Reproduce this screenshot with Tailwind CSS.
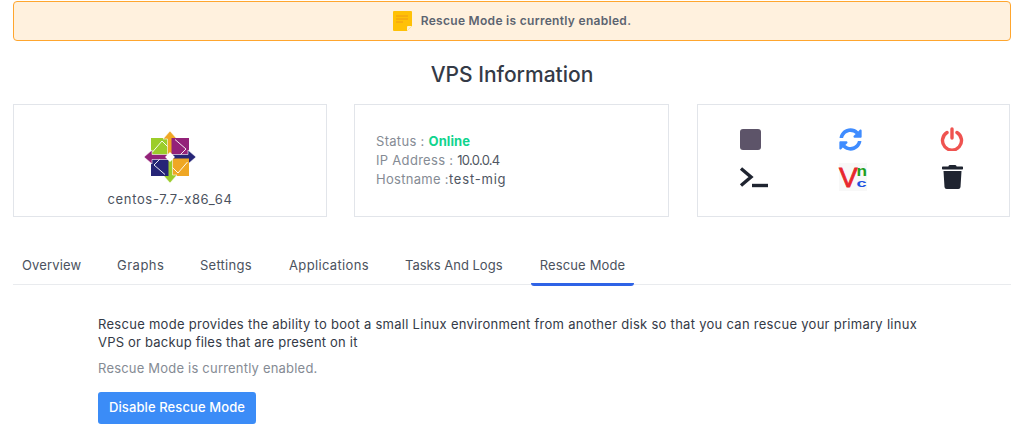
<!DOCTYPE html>
<html lang="en">
<head>
    <meta charset="UTF-8">
    <title>VPS Information</title>
    <script src="https://cdn.jsdelivr.net/npm/@tailwindcss/browser@4"></script>
</head>
<body class="bg-white font-['Inter',sans-serif] text-[#3f4651] overflow-hidden">
    <div class="px-[13px] pt-[1px]">

        <!-- Alert -->
        <div class="h-[40px] bg-[#fff1de] border border-[#ffa62e] rounded-[4px] flex items-center justify-center gap-[8px]">
            <svg class="w-[19px] h-[20px]" viewBox="0 0 19 20">
                <path d="M0 1a1 1 0 0 1 1-1h17a1 1 0 0 1 1 1v14l-5 5H1a1 1 0 0 1-1-1z" fill="#ffc107"/>
                <path d="M3 5h12M3 8h12M3 11h7" stroke="#f09a17" stroke-width="1"/>
                <path d="M14 20v-4a1 1 0 0 1 1-1h4z" fill="#fff3d0"/>
            </svg>
            <span class="text-[12px] font-semibold tracking-[0.3px] text-[#5c6470] ml-[1px]">Rescue Mode is currently enabled.</span>
        </div>

        <h2 class="mt-[21px] h-[26px] leading-[26px] text-center text-[21px] font-medium text-[#343a46]">VPS Information</h2>

        <!-- Cards -->
        <div class="mt-[16px] flex h-[113px]">
            <div class="w-[314px] border border-[#e2e5ea] flex flex-col items-center pt-[26px]">
                <svg class="w-[52px] h-[52px]" viewBox="0 0 52 52">
                    <g>
                        <rect x="7" y="7" width="17.500" height="17.500" fill="#9ccd2a"/>
                        <path d="M8.500 21L18 10l6 6" fill="none" stroke="#fff" stroke-width="0.900"/>
                        <path d="M26 0l7 8h-4.500v16h-5V8H19z" fill="#efa724" stroke="#fff" stroke-width="0.600"/>
                    </g>
                    <g transform="rotate(90 26 26)">
                        <rect x="7" y="7" width="17.500" height="17.500" fill="#932279"/>
                        <path d="M8.500 21L18 10l6 6" fill="none" stroke="#fff" stroke-width="0.900"/>
                        <path d="M26 0l7 8h-4.500v16h-5V8H19z" fill="#262577" stroke="#fff" stroke-width="0.600"/>
                    </g>
                    <g transform="rotate(180 26 26)">
                        <rect x="7" y="7" width="17.500" height="17.500" fill="#efa724"/>
                        <path d="M8.500 21L18 10l6 6" fill="none" stroke="#fff" stroke-width="0.900"/>
                        <path d="M26 0l7 8h-4.500v16h-5V8H19z" fill="#9ccd2a" stroke="#fff" stroke-width="0.600"/>
                    </g>
                    <g transform="rotate(270 26 26)">
                        <rect x="7" y="7" width="17.500" height="17.500" fill="#262577"/>
                        <path d="M8.500 21L18 10l6 6" fill="none" stroke="#fff" stroke-width="0.900"/>
                        <path d="M26 0l7 8h-4.500v16h-5V8H19z" fill="#932279" stroke="#fff" stroke-width="0.600"/>
                    </g>
                    <rect x="22.500" y="22.500" width="7" height="7" fill="#fff" transform="rotate(45 26 26)"/>
                </svg>
                <span class="mt-[7px] text-[13px] text-[#4b525e] tracking-[0.65px]">centos-7.7-x86_64</span>
            </div>

            <div class="w-[315px] ml-[27px] border border-[#e2e5ea] flex flex-col justify-center pl-[21px] pb-[1px] text-[13px] leading-[19px] tracking-[0.3px] text-[#858b94]">
                <div>Status : <span class="font-bold text-[#10d48e] tracking-[0.1px]">Online</span></div>
                <div>IP Address : <span class="text-[#4f5662] tracking-[-0.7px]">10.0.0.4</span></div>
                <div>Hostname :<span class="text-[#4f5662] tracking-[0.8px]">test-mig</span></div>
            </div>

            <div class="w-[313px] ml-[28px] border border-[#e2e5ea] pt-[15px] pl-[2px] grid grid-cols-[100px_100px_104px] auto-rows-[38px] place-items-center content-start">
                <div class="w-[21px] h-[21px] bg-[#5d5469] rounded-[3px]"></div>
                <svg class="w-[23px] h-[23px]" viewBox="0 0 512 512"><path fill="#3f8cff" d="M370.72 133.28C339.458 104.008 298.888 87.962 255.848 88c-77.458.068-144.328 53.178-162.791 126.85-1.344 5.363-6.122 9.15-11.651 9.15H24.103c-7.498 0-13.194-6.807-11.807-14.176C33.933 94.924 134.813 8 256 8c66.448 0 126.791 26.136 171.315 68.685L463.03 40.97C478.149 25.851 504 36.559 504 57.941V192c0 13.255-10.745 24-24 24H345.941c-21.382 0-32.09-25.851-16.971-40.971l41.75-41.749zM32 296h134.059c21.382 0 32.09 25.851 16.971 40.971l-41.75 41.75c31.262 29.273 71.835 45.319 114.876 45.28 77.418-.07 144.315-53.144 162.787-126.849 1.344-5.363 6.122-9.15 11.651-9.15h57.304c7.498 0 13.194 6.807 11.807 14.176C478.067 417.076 377.187 504 256 504c-66.448 0-126.791-26.136-171.315-68.685L48.97 471.03C33.851 486.149 8 475.441 8 454.059V320c0-13.255 10.745-24 24-24z"/></svg>
                <svg class="w-[24px] h-[24px]" viewBox="0 0 24 24" fill="none" stroke="#ef5350" stroke-width="3.400" stroke-linecap="round"><path d="M7 5.500a9.500 9.500 0 1 0 10 0"/><path d="M12 2v9"/></svg>
                <svg class="w-[30px] h-[22px] ml-[7px]" viewBox="0 0 30 22" fill="none" stroke="#1f2430" stroke-width="3.400"><path d="M2 2.500l10 8.500-10 8.500"/><path d="M13 19.500h16"/></svg>
                <svg class="w-[28px] h-[28px] overflow-visible ml-[5px]" viewBox="0 0 28 28" font-family="'Liberation Sans',sans-serif">
                    <rect width="28" height="28" fill="#f8f8f8"/>
                    <text x="0" y="24" font-size="28" fill="#e8262d" stroke="#e8262d" stroke-width="0.800">V</text>
                    <text transform="translate(17.500 13) scale(1.150 1)" font-size="15" font-weight="700" fill="#1ea01e">n</text>
                    <text transform="translate(17.500 24) scale(1.900 1.200)" font-size="9.500" font-weight="700" fill="#1c4fe0">c</text>
                </svg>
                <svg class="w-[21px] h-[24px]" viewBox="0 0 448 512"><path fill="#1f2430" d="M432 32H312l-9.400-18.700A24 24 0 0 0 281.100 0H166.800a23.720 23.720 0 0 0-21.400 13.300L136 32H16A16 16 0 0 0 0 48v32a16 16 0 0 0 16 16h416a16 16 0 0 0 16-16V48a16 16 0 0 0-16-16zM53.200 467a48 48 0 0 0 47.900 45h245.800a48 48 0 0 0 47.900-45L416 128H32z"/></svg>
            </div>
        </div>

        <!-- Tabs -->
        <div class="mt-[29px] h-[39px] flex border-b border-[#e9ebee] text-[13px] tracking-[0.15px] text-[#4b525e]">
            <a class="w-[86px] pl-[9px] pt-[10px]">Overview</a>
            <a class="w-[83px] pl-[18px] pt-[10px] tracking-[0.5px]">Graphs</a>
            <a class="w-[89px] pl-[18px] pt-[10px] tracking-[0.25px]">Settings</a>
            <a class="w-[117px] pl-[18px] pt-[10px] tracking-[0.35px]">Applications</a>
            <a class="w-[143px] pl-[17px] pt-[10px] tracking-[0px]">Tasks And Logs</a>
            <a class="w-[103px] h-[40px] text-center pt-[10px] border-b-[3px] border-[#2f63e6] rounded-b-[3px]">Rescue Mode</a>
        </div>

        <!-- Rescue mode -->
        <div class="pl-[85px] pt-[30px]">
            <p class="text-[13px] leading-[18px] text-[#343a46]">
                <span class="block tracking-[0.28px]">Rescue mode provides the ability to boot a small Linux environment from another disk so that you can rescue your primary linux</span>
                <span class="block tracking-[0.2px]">VPS or backup files that are present on it</span>
            </p>
            <p class="mt-[8px] text-[13px] leading-[18px] tracking-[0.2px] text-[#858b94]">Rescue Mode is currently enabled.</p>
            <button class="mt-[15px] w-[158px] h-[32px] bg-[#3b8cf7] rounded-[3px] text-white text-[13px] tracking-[0.1px] font-medium">Disable Rescue Mode</button>
        </div>
    </div>
</body>
</html>
